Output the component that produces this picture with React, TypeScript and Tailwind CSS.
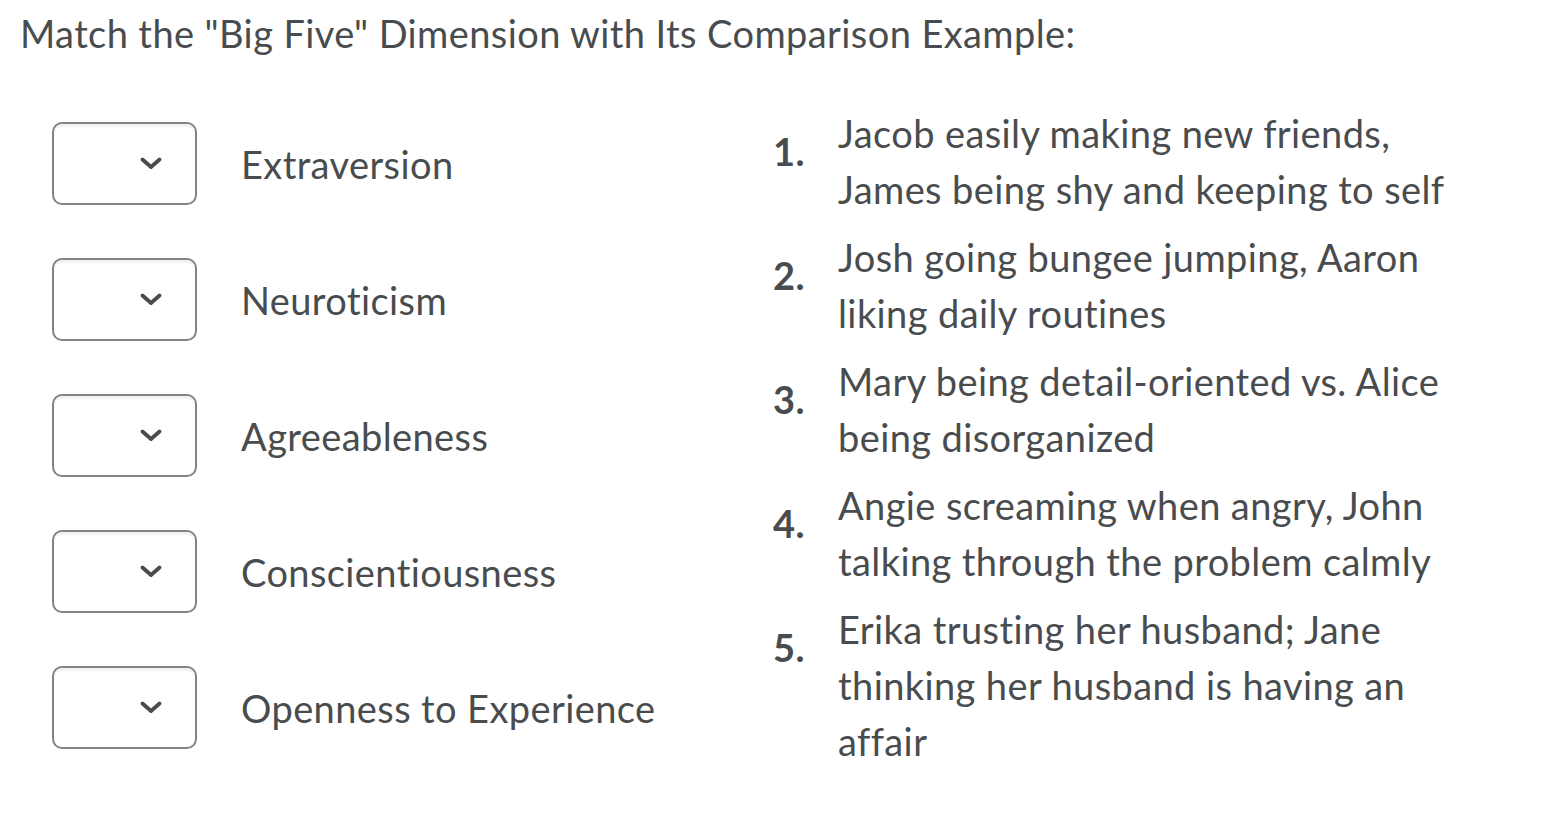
import { useState } from 'react'

type Pair = {
    dimension: string
    example: string
}

const pairs: Pair[] = [
    { dimension: 'Extraversion', example: 'Jacob easily making new friends, James being shy and keeping to self' },
    { dimension: 'Neuroticism', example: 'Josh going bungee jumping, Aaron liking daily routines' },
    { dimension: 'Agreeableness', example: 'Mary being detail-oriented vs. Alice being disorganized' },
    { dimension: 'Conscientiousness', example: 'Angie screaming when angry, John talking through the problem calmly' },
    { dimension: 'Openness to Experience', example: 'Erika trusting her husband; Jane thinking her husband is having an affair' },
]

function Chevron() {
    return (
        <svg width="22" height="13" viewBox="0 0 22 13" fill="none">
            <path d="M2.5 2.5 L11 10 L19.5 2.5" stroke="#494c4e" strokeWidth="3.8" strokeLinecap="round" strokeLinejoin="round" />
        </svg>
    )
}

function MatchSelect({ label }: { label: string }) {
    const [value, setValue] = useState('')

    return (
        <div className="flex items-center h-[83px]">
            <div className="relative w-[145px] h-[83px] flex-shrink-0 rounded-[10px] border-2 border-[#80858a] bg-white shadow-[inset_0_3px_2px_rgba(0,0,0,0.05)] flex items-center justify-end pr-[33px]">
                <select
                    value={value}
                    onChange={(e) => setValue(e.target.value)}
                    aria-label={label}
                    className="absolute inset-0 opacity-0 cursor-pointer"
                >
                    <option value=""></option>
                    {pairs.map((_, i) => (
                        <option key={i} value={String(i + 1)}>{i + 1}</option>
                    ))}
                </select>
                <Chevron />
            </div>
            <span className="ml-[44px]">{label}</span>
        </div>
    )
}

export default function App() {
    return (
        <div className="min-h-screen bg-white text-[#494c4e] text-[38px] leading-[56px] tracking-[0.4px] font-['Lato',sans-serif]">
            <h1 className="pl-[20px] pt-[5px] font-normal">Match the "Big Five" Dimension with Its Comparison Example:</h1>

            <div className="flex items-start pl-[52px] mt-[44px]">
                {/* dropdowns and dimension names */}
                <div className="w-[721px] pt-[17px] flex flex-col gap-[53px]">
                    {pairs.map((p) => (
                        <MatchSelect key={p.dimension} label={p.dimension} />
                    ))}
                </div>

                {/* numbered examples */}
                <ol className="flex flex-col gap-[12px]">
                    {pairs.map((p, i) => (
                        <li key={i} className="flex">
                            <span className="w-[65px] flex-shrink-0 pt-[18px] font-bold">{i + 1}.</span>
                            <span className="w-[630px]">{p.example}</span>
                        </li>
                    ))}
                </ol>
            </div>
        </div>
    )
}
